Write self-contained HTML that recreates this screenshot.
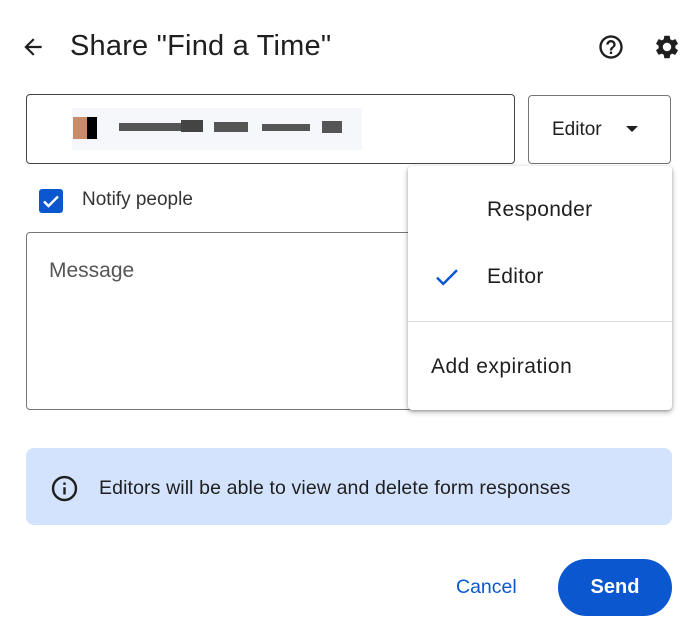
<!DOCTYPE html>
<html><head><style>
body{margin:0;width:700px;height:640px;background:#fff;font-family:"Liberation Sans",Arial,sans-serif;position:relative;overflow:hidden;color:#1f1f1f}
.a{position:absolute;white-space:nowrap}
</style></head><body>
<svg class="a" style="left:20px;top:34px" width="26" height="26" viewBox="0 0 24 24"><path d="M20 11H7.83l5.59-5.59L12 4l-8 8 8 8 1.41-1.41L7.83 13H20v-2z" fill="#1f1f1f"/></svg>
<div class="a" style="left:70px;top:30px;font-size:29px;letter-spacing:0.2px">Share "Find a Time"</div>
<svg class="a" style="left:597px;top:33px" width="28" height="28" viewBox="0 0 24 24"><path fill="#1f1f1f" d="M11 18h2v-2h-2v2zm1-16C6.48 2 2 6.48 2 12s4.48 10 10 10 10-4.48 10-10S17.52 2 12 2zm0 18c-4.41 0-8-3.59-8-8s3.59-8 8-8 8 3.59 8 8-3.59 8-8 8zm0-14c-2.21 0-4 1.79-4 4h2c0-1.1.9-2 2-2s2 .9 2 2c0 2-3 1.75-3 5h2c0-2.25 3-2.5 3-5 0-2.21-1.79-4-4-4z"/></svg>
<svg class="a" style="left:653px;top:33px" width="28" height="28" viewBox="0 0 24 24"><path fill="#1f1f1f" d="M19.14 12.94c.04-.3.06-.61.06-.94 0-.32-.02-.64-.07-.94l2.03-1.58a.49.49 0 00.12-.61l-1.920-3.32a.49.49 0 00-.59-.22l-2.39.96c-.5-.38-1.03-.7-1.62-.94l-.36-2.54a.48.48 0 00-.48-.41h-3.84c-.24 0-.43.17-.47.41l-.36 2.54c-.59.24-1.13.57-1.62.94l-2.39-.96a.48.48 0 00-.59.22L2.74 8.87c-.12.21-.08.47.12.61l2.03 1.58c-.05.3-.09.63-.09.94s.02.64.07.94l-2.03 1.58a.49.49 0 00-.12.61l1.92 3.32c.12.22.37.29.59.22l2.39-.96c.5.38 1.030.7 1.62.94l.36 2.54c.05.24.24.41.48.41h3.840c.24 0 .44-.17.47-.41l.36-2.54c.59-.24 1.13-.56 1.62-.94l2.39.96c.22.08.47 0 .59-.22l1.92-3.32c.12-.22.07-.47-.12-.61l-2.01-1.58zM12 15.6A3.6 3.6 0 1112 8.4a3.6 3.6 0 010 7.2z"/></svg>
<div class="a" style="left:26px;top:94px;width:487px;height:68px;border:1px solid #444;border-radius:4px"></div>
<div class="a" style="left:72px;top:108px;width:290px;height:42px;background:#f6f7fa"></div>
<div class="a" style="left:73px;top:117px;width:14px;height:22px;background:#c98b6a"></div>
<div class="a" style="left:87px;top:117px;width:10px;height:22px;background:#000"></div>
<div class="a" style="left:119px;top:123px;width:62px;height:8px;background:#555"></div>
<div class="a" style="left:181px;top:120px;width:22px;height:12px;background:#444"></div>
<div class="a" style="left:214px;top:122px;width:34px;height:10px;background:#555"></div>
<div class="a" style="left:262px;top:124px;width:48px;height:7px;background:#555"></div>
<div class="a" style="left:322px;top:121px;width:20px;height:12px;background:#555"></div>
<div class="a" style="left:528px;top:95px;width:143px;height:69px;border:1px solid #747775;border-radius:4px;box-sizing:border-box"></div>
<div class="a" style="left:552px;top:119px;font-size:19px">Editor</div>
<div class="a" style="left:626px;top:126px;width:0;height:0;border-left:6px solid transparent;border-right:6px solid transparent;border-top:6px solid #1f1f1f"></div>
<div class="a" style="left:39px;top:189px;width:24px;height:24px;background:#0b57d0;border-radius:3px"></div>
<svg class="a" style="left:39px;top:189px" width="24" height="24" viewBox="0 0 24 24"><path d="M5 12.5l4.5 4.5L19 7.5" stroke="#fff" stroke-width="2.4" fill="none"/></svg>
<div class="a" style="left:82px;top:189px;font-size:19px;color:#333">Notify people</div>
<div class="a" style="left:26px;top:232px;width:450px;height:176px;border:1px solid #747775;border-radius:4px"></div>
<div class="a" style="left:49px;top:259px;font-size:21px;color:#555">Message</div>
<div class="a" style="left:408px;top:166px;width:264px;height:244px;background:#fff;border-radius:4px;box-shadow:0 2px 6px rgba(0,0,0,.3),0 1px 2px rgba(0,0,0,.2)"></div>
<div class="a" style="left:487px;top:198px;font-size:21px;letter-spacing:0.3px">Responder</div>
<svg class="a" style="left:432px;top:262px" width="30" height="30" viewBox="0 0 24 24"><path d="M4 12.5l5 5L20 6.5" stroke="#0b57d0" stroke-width="2" fill="none"/></svg>
<div class="a" style="left:487px;top:265px;font-size:21px;letter-spacing:0.3px">Editor</div>
<div class="a" style="left:408px;top:321px;width:264px;height:1px;background:#ddd"></div>
<div class="a" style="left:431px;top:355px;font-size:21px;letter-spacing:0.5px">Add expiration</div>
<div class="a" style="left:26px;top:448px;width:646px;height:77px;background:#d3e3fd;border-radius:8px"></div>
<svg class="a" style="left:50px;top:474px" width="29" height="29" viewBox="0 0 24 24"><circle cx="12" cy="12" r="9.5" stroke="#1f1f1f" stroke-width="2" fill="none"/><path d="M12 11v6M12 7v2" stroke="#1f1f1f" stroke-width="2"/></svg>
<div class="a" style="left:99px;top:477px;font-size:19.5px;letter-spacing:0.12px;color:#1f1f1f">Editors will be able to view and delete form responses</div>
<div class="a" style="left:456px;top:576px;font-size:19.5px;color:#0b57d0">Cancel</div>
<div class="a" style="left:558px;top:559px;width:114px;height:57px;background:#0b57d0;border-radius:29px;color:#fff;font-size:20px;font-weight:bold;text-align:center;line-height:57px">Send</div>
</body></html>
